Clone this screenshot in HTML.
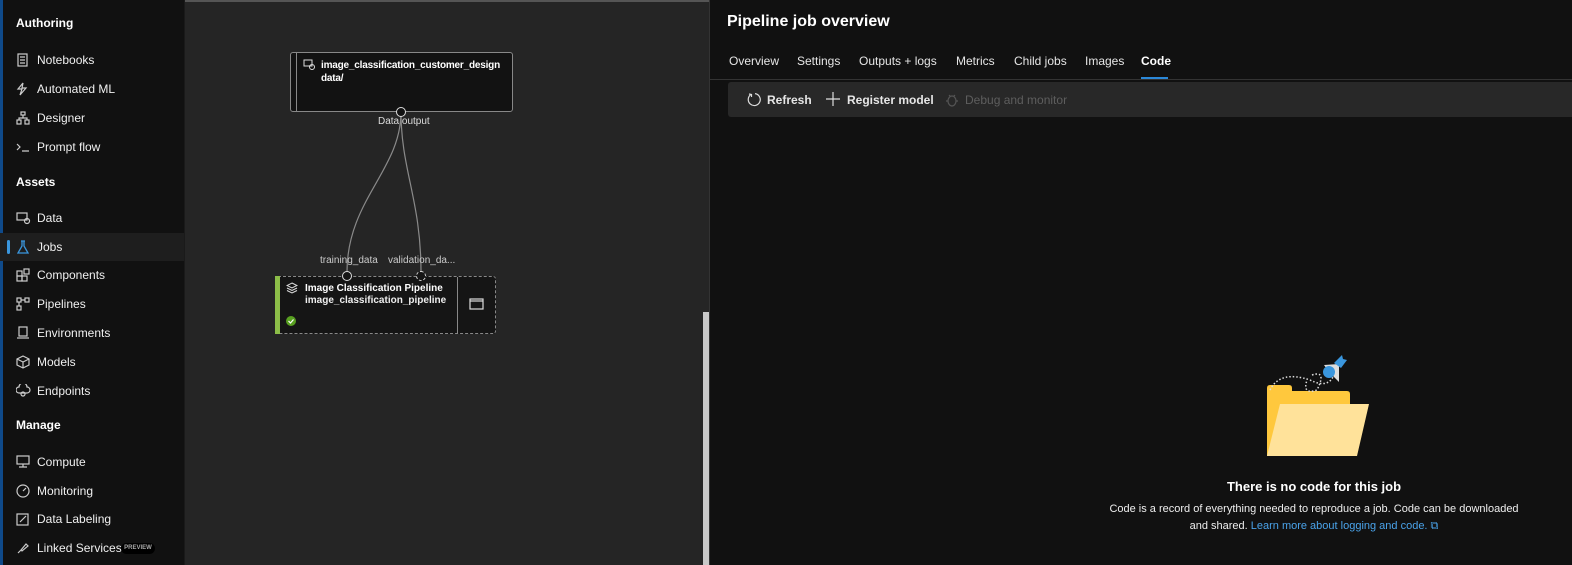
<!DOCTYPE html>
<html><head><meta charset="utf-8"><style>
*{margin:0;padding:0;box-sizing:border-box}
body{width:1572px;height:565px;background:#111;font-family:"Liberation Sans",sans-serif;color:#fff;position:relative;overflow:hidden}
.abs{position:absolute}
#side{left:0;top:0;width:185px;height:565px;background:#111;border-right:1px solid #1a1a1a}
#strip{left:0;top:0;width:3px;height:565px;background:#0f4a8a}
.h{position:absolute;left:16px;font-size:12px;font-weight:bold;color:#fff}
.it{position:absolute;left:0;width:184px;height:28px;font-size:12px;color:#f0f0f0;line-height:28px}
.it span{position:absolute;left:37px}
.it svg{position:absolute;left:16px;top:7px}
#canvas{left:185px;top:0;width:525px;height:565px;background:#252525}
#right{left:710px;top:0;width:862px;height:565px;background:#111}
.tab{position:absolute;top:54px;font-size:12px;color:#e6e6e6}
</style></head><body>
<div class="abs" id="side"></div>
<div class="abs" id="strip"></div>
<div class="h" style="top:16px">Authoring</div>
<div class="h" style="top:175px">Assets</div>
<div class="h" style="top:418px">Manage</div>

<div class="it" style="top:46px"><svg width="13" height="14" fill="none" stroke="#ccc" stroke-width="1.2"><rect x="2" y="1" width="9" height="12"/><path d="M4 4h5M4 7h5M4 10h5"/></svg><span>Notebooks</span></div>
<div class="it" style="top:75px"><svg width="14" height="14" fill="none" stroke="#ccc" stroke-width="1.2"><path d="M7 1L2 7h4l-2 6 6-7H6z"/></svg><span>Automated ML</span></div>
<div class="it" style="top:104px"><svg width="14" height="14" fill="none" stroke="#ccc" stroke-width="1.2"><rect x="5" y="1" width="4" height="3"/><rect x="1" y="9" width="4" height="4"/><rect x="9" y="9" width="4" height="4"/><path d="M7 4v3M3 9V7h8v2"/></svg><span>Designer</span></div>
<div class="it" style="top:133px"><svg width="14" height="14" fill="none" stroke="#ccc" stroke-width="1.2"><path d="M1 4l3 3-3 3M6 11h7"/></svg><span>Prompt flow</span></div>
<div class="it" style="top:204px"><svg width="15" height="14" fill="none" stroke="#ccc" stroke-width="1.2"><rect x="1" y="2" width="10" height="7"/><circle cx="11" cy="10" r="2.5"/></svg><span>Data</span></div>
<div class="it" style="top:233px;background:#1e1e1e"><div class="abs" style="left:7px;top:7px;width:3px;height:14px;background:#3a96dd;border-radius:2px"></div><svg width="14" height="14" fill="none" stroke="#3a96dd" stroke-width="1.3"><path d="M5 1h4M6 1v5L2 13h10L8 6V1"/></svg><span>Jobs</span></div>
<div class="it" style="top:261px"><svg width="14" height="14" fill="none" stroke="#ccc" stroke-width="1.2"><rect x="1" y="3" width="5" height="5"/><rect x="1" y="8" width="5" height="5"/><rect x="6" y="8" width="5" height="5"/><rect x="8" y="1" width="5" height="5"/></svg><span>Components</span></div>
<div class="it" style="top:290px"><svg width="14" height="14" fill="none" stroke="#ccc" stroke-width="1.2"><rect x="1" y="1" width="4" height="4"/><rect x="9" y="1" width="4" height="4"/><rect x="1" y="9" width="4" height="4"/><path d="M5 3h4M3 5v4"/></svg><span>Pipelines</span></div>
<div class="it" style="top:319px"><svg width="14" height="14" fill="none" stroke="#ccc" stroke-width="1.2"><rect x="3" y="1" width="8" height="9"/><path d="M1 12h12"/></svg><span>Environments</span></div>
<div class="it" style="top:348px"><svg width="14" height="14" fill="none" stroke="#ccc" stroke-width="1.2"><path d="M7 1l6 3v6l-6 3-6-3V4zM1 4l6 3 6-3M7 7v6"/></svg><span>Models</span></div>
<div class="it" style="top:377px"><svg width="15" height="14" fill="none" stroke="#ccc" stroke-width="1.2"><path d="M3 9a3 3 0 010-6 4 4 0 018 0 3 3 0 010 6z"/><circle cx="7" cy="10" r="2"/></svg><span>Endpoints</span></div>
<div class="it" style="top:448px"><svg width="14" height="14" fill="none" stroke="#ccc" stroke-width="1.2"><rect x="1" y="1" width="12" height="8"/><path d="M7 9v3M3 12h8"/></svg><span>Compute</span></div>
<div class="it" style="top:477px"><svg width="14" height="14" fill="none" stroke="#ccc" stroke-width="1.2"><circle cx="7" cy="7" r="6"/><path d="M7 7l3-3"/></svg><span>Monitoring</span></div>
<div class="it" style="top:505px"><svg width="14" height="14" fill="none" stroke="#ccc" stroke-width="1.2"><rect x="1" y="2" width="11" height="11"/><path d="M4 10l6-6"/></svg><span>Data Labeling</span></div>
<div class="it" style="top:534px"><svg width="14" height="14" fill="none" stroke="#ccc" stroke-width="1.2"><path d="M2 12l4-4M5 9l5-6 2 2-6 5z"/></svg><span>Linked Services</span><div class="abs" style="left:121px;top:9px;width:34px;height:11px;background:#000;border-radius:6px;font-size:6px;line-height:11px;text-align:center;color:#aaa;font-weight:bold">PREVIEW</div></div>

<div class="abs" id="canvas"></div>
<div class="abs" style="left:185px;top:0;width:1387px;height:2px;background:#555"></div>
<div class="abs" style="left:703px;top:312px;width:6px;height:253px;background:#c8c8c8"></div>
<div class="abs" style="left:709px;top:0;width:1px;height:565px;background:#333"></div>

<svg class="abs" style="left:185px;top:0" width="525" height="565">
<path d="M216 112C216 170 162 200 162 272M216 112C216 170 236 200 236 272" stroke="#8a8a8a" stroke-width="1.2" fill="none"/>
</svg>
<div class="abs" style="left:290px;top:52px;width:223px;height:60px;background:#121212;border:1px solid #888;border-radius:3px"></div>
<div class="abs" style="left:296px;top:53px;width:1px;height:58px;background:#888"></div>
<svg class="abs" style="left:303px;top:59px" width="13" height="12" fill="none" stroke="#ddd" stroke-width="1"><rect x="1" y="1" width="8" height="6"/><circle cx="9" cy="8" r="2.5"/></svg>
<div class="abs" style="left:321px;top:59px;font-size:10px;font-weight:bold;line-height:13px;letter-spacing:-0.2px">image_classification_customer_design<br>data/</div>
<div class="abs" style="left:396px;top:107px;width:10px;height:10px;border-radius:50%;background:#111;border:1px solid #ddd"></div>
<div class="abs" style="left:378px;top:116px;font-size:10px;color:#ddd">Data output</div>
<div class="abs" style="left:320px;top:255px;font-size:10px;color:#ccc">training_data</div>
<div class="abs" style="left:388px;top:255px;font-size:10px;color:#ccc">validation_da...</div>
<div class="abs" style="left:275px;top:276px;width:221px;height:58px;background:#151515;border:1px dashed #888;border-radius:3px"></div>
<div class="abs" style="left:275px;top:276px;width:5px;height:58px;background:#8cbd48"></div>
<div class="abs" style="left:457px;top:277px;width:1px;height:56px;background:#888"></div>
<div class="abs" style="left:342px;top:271px;width:10px;height:10px;border-radius:50%;background:#151515;border:1px solid #ddd"></div>
<div class="abs" style="left:416px;top:271px;width:10px;height:10px;border-radius:50%;background:#151515;border:1px dashed #ddd"></div>
<svg class="abs" style="left:286px;top:282px" width="12" height="12" fill="none" stroke="#ddd" stroke-width="1"><path d="M6 1l5 2.5-5 2.5-5-2.5zM1 6l5 2.5 5-2.5M1 8.5l5 2.5 5-2.5"/></svg>
<div class="abs" style="left:305px;top:283px;font-size:10px;font-weight:bold;line-height:12px">Image Classification Pipeline<br><span style="font-weight:bold;color:#eee">image_classification_pipeline</span></div>
<svg class="abs" style="left:286px;top:316px" width="10" height="10"><circle cx="5" cy="5" r="5" fill="#58a020"/><path d="M2.5 5l2 2 3-3.5" stroke="#fff" fill="none" stroke-width="1.2"/></svg>
<svg class="abs" style="left:469px;top:298px" width="15" height="12" fill="none" stroke="#ddd" stroke-width="1.2"><rect x="1" y="1" width="13" height="10"/><path d="M1 3h13"/></svg>

<div class="abs" id="right" style="left:710px"></div>
<div class="abs" style="left:727px;top:13px;font-size:16px;font-weight:bold">Pipeline job overview</div>
<div class="tab" style="left:729px">Overview</div>
<div class="tab" style="left:797px">Settings</div>
<div class="tab" style="left:859px">Outputs + logs</div>
<div class="tab" style="left:956px">Metrics</div>
<div class="tab" style="left:1014px">Child jobs</div>
<div class="tab" style="left:1085px">Images</div>
<div class="tab" style="left:1141px;color:#fff;font-weight:bold">Code</div>
<div class="abs" style="left:1141px;top:77px;width:27px;height:2px;background:#2b88d8"></div>
<div class="abs" style="left:710px;top:79px;width:862px;height:1px;background:#333"></div>
<div class="abs" style="left:728px;top:82px;width:844px;height:35px;background:#282828;border-radius:3px 0 0 3px"></div>
<svg class="abs" style="left:747px;top:92px" width="15" height="15" fill="none" stroke="#ddd" stroke-width="1.2"><path d="M4 2.5A6 6 0 1 0 8 1.6M2 2l2.5 0.5L4.5 5"/></svg>
<div class="abs" style="left:767px;top:93px;font-size:12px;font-weight:bold;color:#e6e6e6">Refresh</div>
<svg class="abs" style="left:826px;top:92px" width="14" height="14" stroke="#ddd" stroke-width="1.2"><path d="M7 0v14M0 7h14"/></svg>
<div class="abs" style="left:847px;top:93px;font-size:12px;font-weight:bold;color:#e6e6e6">Register model</div>
<svg class="abs" style="left:945px;top:92px" width="14" height="15" fill="none" stroke="#555" stroke-width="1.2"><ellipse cx="7" cy="9" rx="4" ry="5"/><path d="M4 3l1.5 1.5M10 3l-1.5 1.5M1 9h2M11 9h2"/></svg>
<div class="abs" style="left:965px;top:93px;font-size:12px;color:#5e5e5e">Debug and monitor</div>

<svg class="abs" style="left:1262px;top:350px" width="110" height="110">
<path d="M5 38q0-3 3-3h19q3 0 3 3v3h55q3 0 3 3v62H5z" fill="#ffc83d"/>
<path d="M18 54h89l-12 52H5z" fill="#ffe29a"/>
<path d="M8 40q10-20 40-10 20 10 25-8" stroke="#ddd" stroke-width="1.5" stroke-dasharray="1.5 2" fill="none"/>
<path d="M50 25q15-5 5 15q-15 5-10-10" stroke="#ddd" stroke-width="1.5" stroke-dasharray="1.5 2" fill="none"/>
<path d="M62 15l15-1 0 18-10-10z" fill="#ddd"/>
<circle cx="67" cy="22" r="6" fill="#3a96dd"/>
<path d="M72 13l8-8 1 4 4 1-6 8z" fill="#3a96dd"/>
</svg>
<div class="abs" style="left:1100px;top:479px;width:428px;text-align:center;font-size:13px;font-weight:bold">There is no code for this job</div>
<div class="abs" style="left:1100px;top:501px;width:428px;text-align:center;font-size:11px;line-height:16.5px;color:#eee">Code is a record of everything needed to reproduce a job. Code can be downloaded and shared. <span style="color:#4aa3ea">Learn more about logging and code. ⧉</span></div>
</body></html>
